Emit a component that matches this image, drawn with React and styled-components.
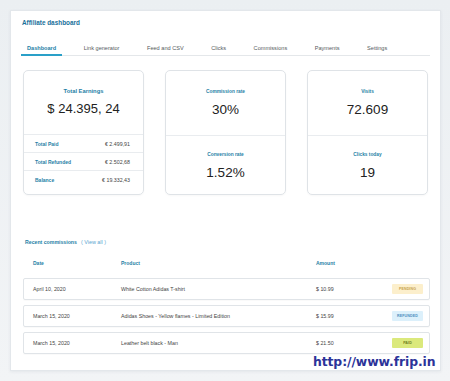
import React from "react";
import styled, { createGlobalStyle } from "styled-components";

const Global = createGlobalStyle`
  html, body { margin: 0; padding: 0; }
  body {
    background: #eef1f4;
    font-family: "Liberation Sans", Arial, sans-serif;
    -webkit-font-smoothing: antialiased;
  }
`;

const TEAL = "#1f7fa6";

const Page = styled.div`
  box-sizing: border-box;
  position: relative;
  width: 450px;
  min-height: 381px;
  padding: 10px 9px 12px 10px;
  background: linear-gradient(180deg, #ebeff2 0%, #f2f4f6 100%);
`;

const Panel = styled.div`
  box-sizing: border-box;
  width: 431px;
  background: #fff;
  border: 1px solid #e3e7eb;
  box-shadow: 0 1px 3px rgba(40, 60, 80, 0.07);
  padding: 8px 10px 16px 11px;
`;

const Title = styled.h1`
  margin: 0;
  font-size: 6.4px;
  line-height: 8px;
  font-weight: 700;
  color: #17709a;
`;

const Tabs = styled.nav`
  display: flex;
  gap: 15.5px;
  margin: 17px 0 0 -1px;
  border-bottom: 1px solid #e4e7ea;
`;

const Tab = styled.span`
  padding: 0 6px 2px;
  margin-bottom: -1px;
  font-size: 5.6px;
  line-height: 8px;
  white-space: nowrap;
  color: ${(p) => (p.$active ? TEAL : "#555b60")};
  font-weight: ${(p) => (p.$active ? 700 : 400)};
  border-bottom: 2px solid ${(p) => (p.$active ? "#2aa0c8" : "transparent")};
`;

const Cards = styled.div`
  display: grid;
  grid-template-columns: repeat(3, 121px);
  column-gap: 21px;
  margin: 14px 0 0 1px;
`;

const Card = styled.div`
  box-sizing: border-box;
  height: 125px;
  display: flex;
  flex-direction: column;
  border: 1px solid #dfe3e7;
  border-radius: 5px;
  box-shadow: 0 1px 2px rgba(0, 0, 0, 0.03);
  overflow: hidden;
`;

const Section = styled.div`
  box-sizing: border-box;
  height: ${(p) => p.$h}px;
  padding-top: ${(p) => p.$pt}px;
  text-align: center;
  border-top: ${(p) => (p.$divided ? "1px solid #e9ecef" : "none")};
`;

const Label = styled.div`
  font-size: ${(p) => p.$size || 4.8}px;
  line-height: 8px;
  font-weight: 700;
  color: ${TEAL};
`;

const Value = styled.div`
  margin-top: ${(p) => p.$mt}px;
  font-size: ${(p) => p.$size || 13.5}px;
  line-height: 15px;
  color: #222;
`;

const DetailRow = styled.div`
  box-sizing: border-box;
  height: 18px;
  display: flex;
  align-items: center;
  justify-content: space-between;
  padding: 1px 13px 0 11px;
  border-top: 1px solid #e9ecef;
`;

const DetailLabel = styled.span`
  font-size: 5px;
  font-weight: 700;
  color: ${TEAL};
`;

const DetailValue = styled.span`
  font-size: 5.3px;
  color: #444;
`;

const RecentHeader = styled.div`
  margin: 43px 0 0 3px;
  line-height: 8px;
  display: flex;
  align-items: center;
  gap: 4px;
`;

const RecentTitle = styled.span`
  font-size: 5.2px;
  font-weight: 700;
  color: ${TEAL};
`;

const ViewAll = styled.span`
  font-size: 5.4px;
  color: #5aa6cf;
`;

const Grid = styled.div`
  box-sizing: border-box;
  display: grid;
  grid-template-columns: 88px 195px 1fr 31px;
  align-items: center;
  margin-left: 1px;
  padding: 0 6px 0 9px;
  border: 1px solid ${(p) => (p.$boxed ? "#e0e4e8" : "transparent")};
  border-radius: 2px;
  height: ${(p) => (p.$boxed ? "22px" : "auto")};
  line-height: 8px;
  box-shadow: ${(p) => (p.$boxed ? "0 1px 1px rgba(0,0,0,0.025)" : "none")};
`;

const HeadRow = styled(Grid)`
  margin-top: 12px;
`;

const Rows = styled.div`
  display: flex;
  flex-direction: column;
  gap: 5px;
  margin-top: 10px;
`;

const HeadCell = styled.span`
  font-size: 5px;
  font-weight: 700;
  color: ${TEAL};
`;

const Cell = styled.span`
  font-size: 5.3px;
  color: #444;
  white-space: nowrap;
`;

const BADGE = {
  pending: { bg: "#fcefcc", fg: "#c7a24c" },
  refunded: { bg: "#dcf0fb", fg: "#4d8fc0" },
  paid: { bg: "#dbe97c", fg: "#6f7f1c" },
};

const Badge = styled.span`
  width: 31px;
  height: 10px;
  display: flex;
  align-items: center;
  justify-content: center;
  border-radius: 1px;
  font-size: 3.6px;
  font-weight: 700;
  letter-spacing: 0.1px;
  text-transform: uppercase;
  background: ${(p) => BADGE[p.$kind].bg};
  color: ${(p) => BADGE[p.$kind].fg};
`;

const Watermark = styled.div`
  position: absolute;
  left: 313px;
  top: 355px;
  font-family: "DejaVu Sans", sans-serif;
  font-weight: 700;
  font-size: 12.4px;
  line-height: 14px;
  letter-spacing: -0.1px;
  color: #2c3399;
  text-shadow: 0 0 1px #fff, 0 0 2px #fff;
  white-space: nowrap;
`;

const tabs = ["Dashboard", "Link generator", "Feed and CSV", "Clicks", "Commissions", "Payments", "Settings"];

const details = [
  ["Total Paid", "€ 2.499,91"],
  ["Total Refunded", "€ 2.502,68"],
  ["Balance", "€ 19.332,43"],
];

const commissions = [
  { date: "April 10, 2020", product: "White Cotton Adidas T-shirt", amount: "$ 10.99", status: "pending" },
  { date: "March 15, 2020", product: "Adidas Shoes - Yellow flames - Limited Edition", amount: "$ 15.99", status: "refunded" },
  { date: "March 15, 2020", product: "Leather belt black - Man", amount: "$ 21.50", status: "paid" },
];

function MetricCard({ top, bottom }) {
  return (
    <Card>
      <Section $h={65} $pt={17}>
        <Label>{top[0]}</Label>
        <Value $mt={5.5}>{top[1]}</Value>
      </Section>
      <Section $h={59} $pt={15} $divided>
        <Label>{bottom[0]}</Label>
        <Value $mt={6}>{bottom[1]}</Value>
      </Section>
    </Card>
  );
}

export default function App() {
  return (
    <Page>
      <Global />
      <Panel>
        <Title>Affiliate dashboard</Title>
        <Tabs>
          {tabs.map((t, i) => (
            <Tab key={t} $active={i === 0}>{t}</Tab>
          ))}
        </Tabs>
        <Cards>
          <Card>
            <Section $h={63} $pt={16}>
              <Label $size={5.8}>Total Earnings</Label>
              <Value $mt={6} $size={13}>$ 24.395, 24</Value>
            </Section>
            {details.map(([l, v]) => (
              <DetailRow key={l}>
                <DetailLabel>{l}</DetailLabel>
                <DetailValue>{v}</DetailValue>
              </DetailRow>
            ))}
          </Card>
          <MetricCard top={["Commission rate", "30%"]} bottom={["Conversion rate", "1.52%"]} />
          <MetricCard top={["Visits", "72.609"]} bottom={["Clicks today", "19"]} />
        </Cards>
        <RecentHeader>
          <RecentTitle>Recent commissions</RecentTitle>
          <ViewAll>( View all )</ViewAll>
        </RecentHeader>
        <HeadRow>
          <HeadCell>Date</HeadCell>
          <HeadCell>Product</HeadCell>
          <HeadCell>Amount</HeadCell>
          <span />
        </HeadRow>
        <Rows>
          {commissions.map((c, i) => (
            <Grid key={i} $boxed>
              <Cell>{c.date}</Cell>
              <Cell>{c.product}</Cell>
              <Cell>{c.amount}</Cell>
              <Badge $kind={c.status}>{c.status}</Badge>
            </Grid>
          ))}
        </Rows>
      </Panel>
      <Watermark>http://www.frip.in</Watermark>
    </Page>
  );
}
